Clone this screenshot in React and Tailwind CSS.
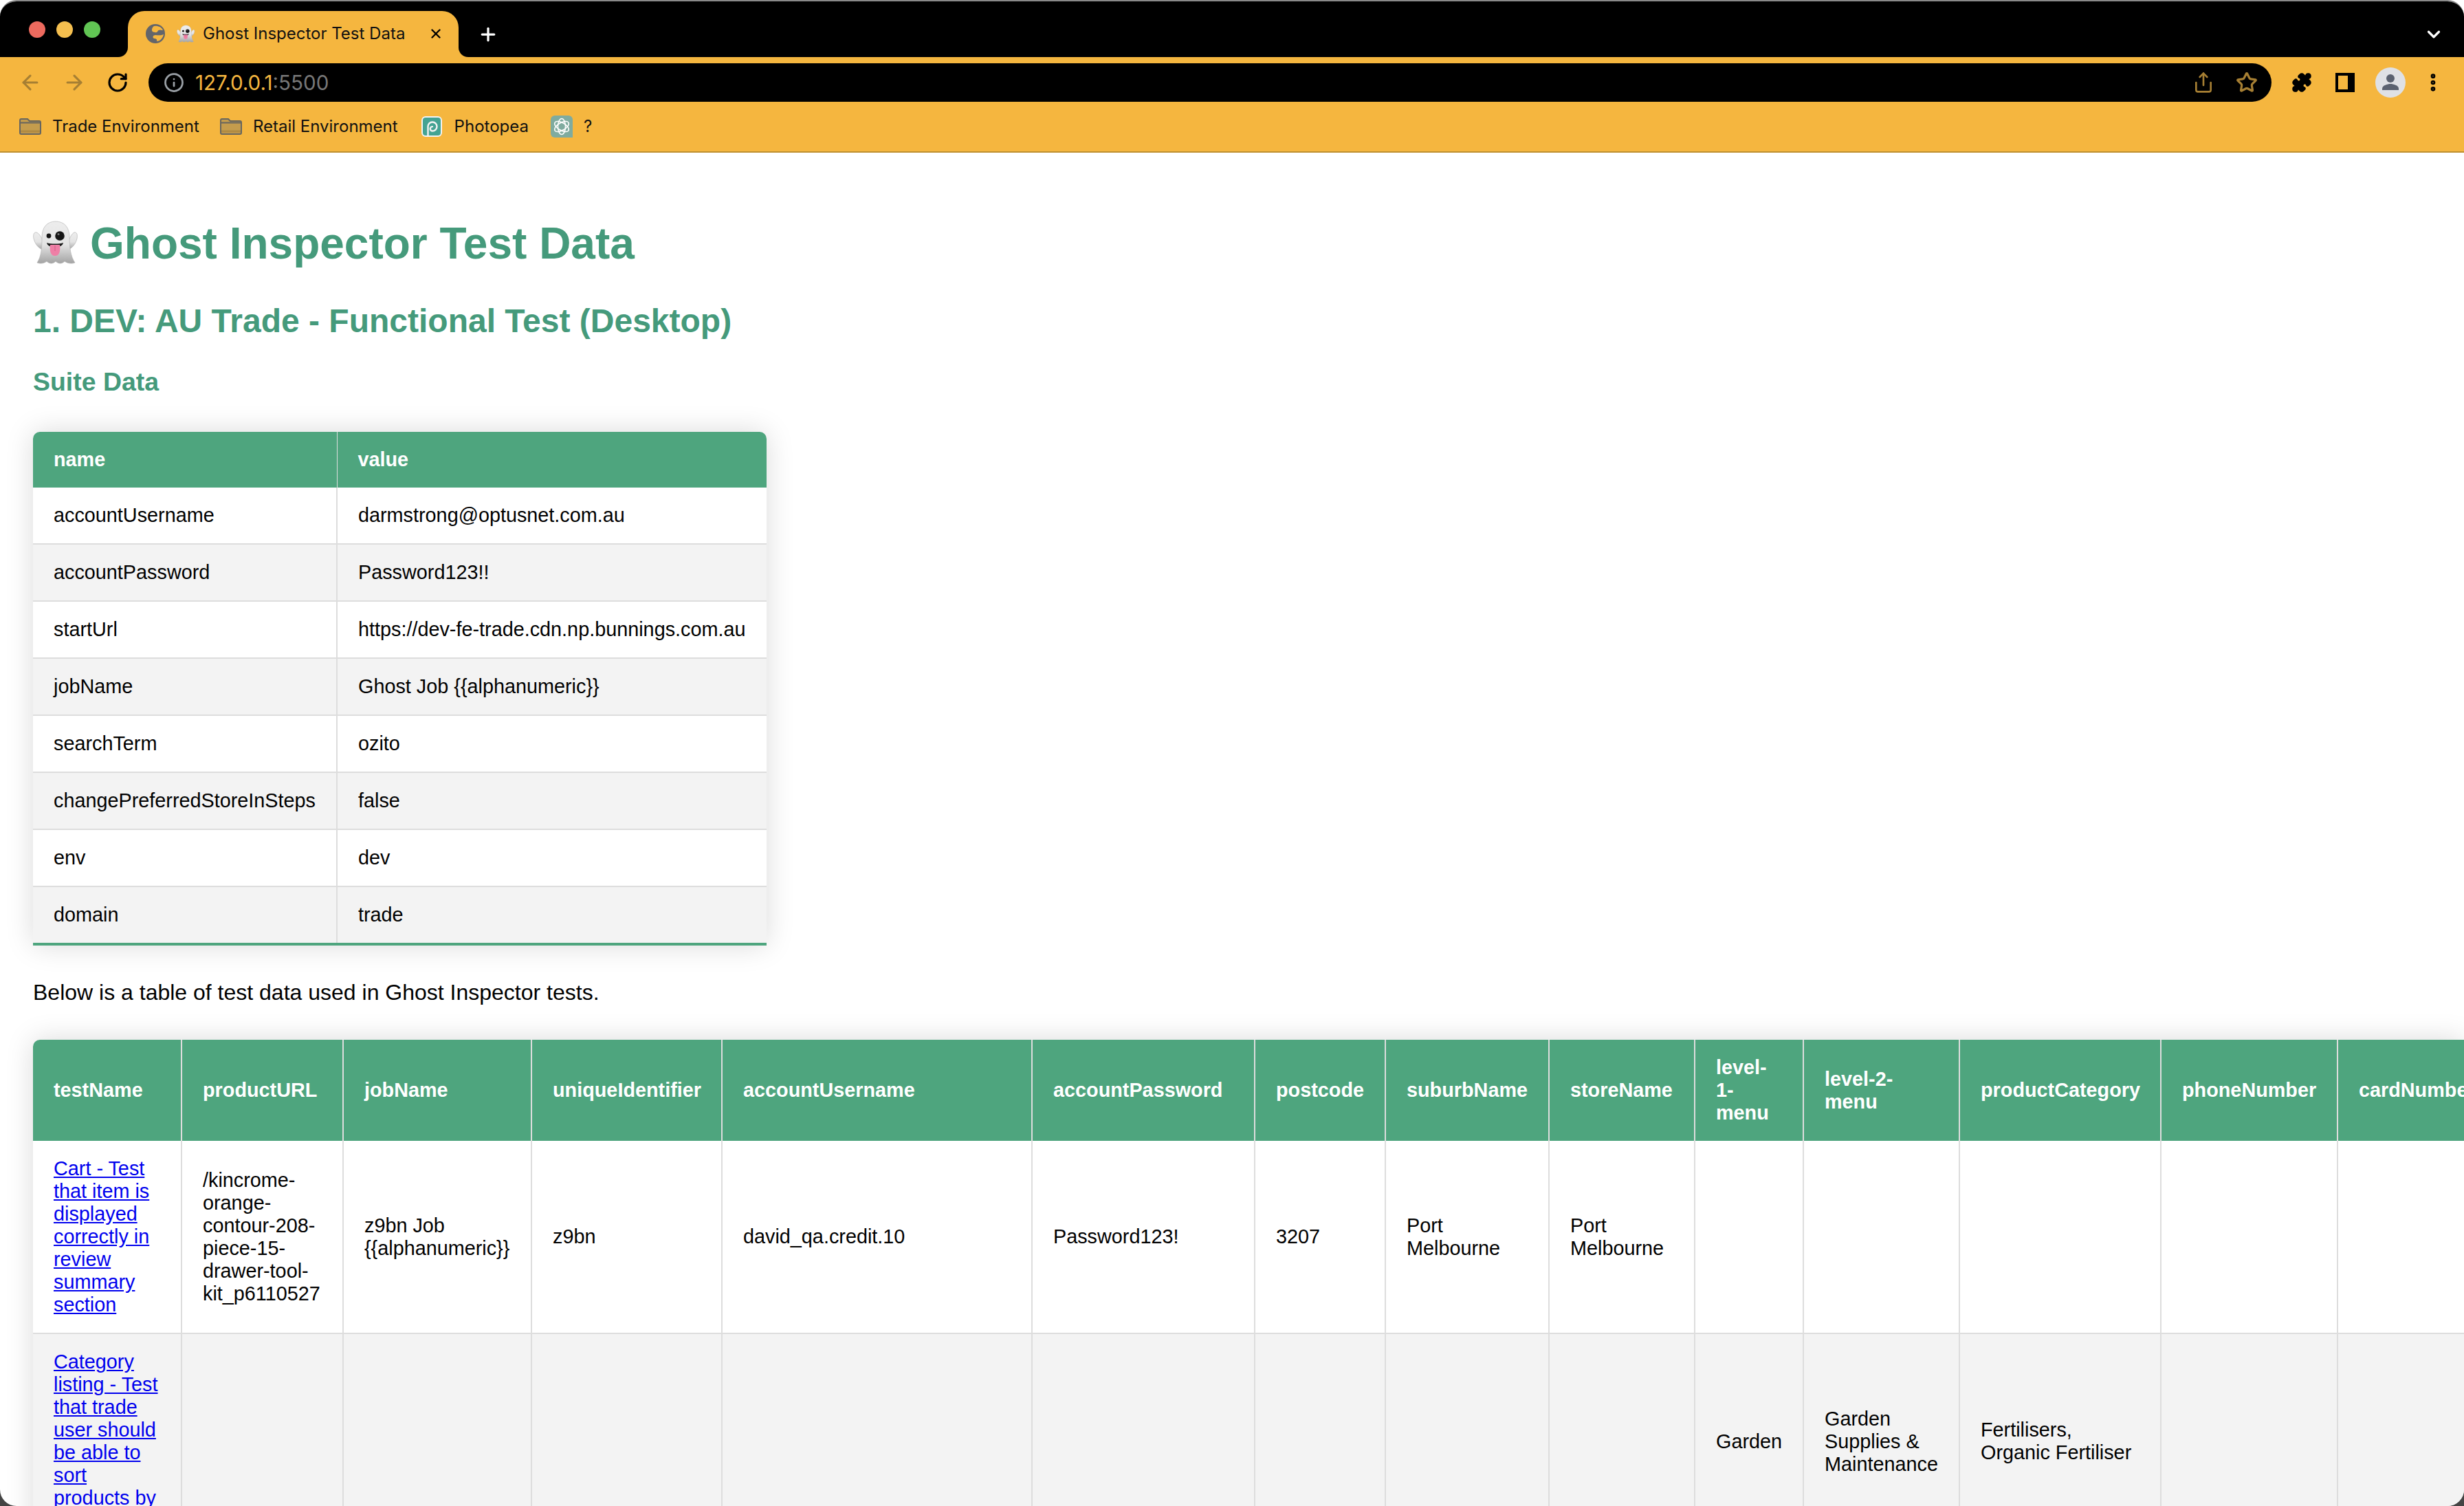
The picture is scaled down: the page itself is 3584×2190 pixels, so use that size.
import { Info, Share, Star, Puzzle, EllipsisVertical, ChevronDown, ArrowLeft, ArrowRight, RotateCw, X, Plus } from 'lucide-react';

const suiteRows = [
  ['accountUsername', 'darmstrong@optusnet.com.au'],
  ['accountPassword', 'Password123!!'],
  ['startUrl', 'https://dev-fe-trade.cdn.np.bunnings.com.au'],
  ['jobName', 'Ghost Job {{alphanumeric}}'],
  ['searchTerm', 'ozito'],
  ['changePreferredStoreInSteps', 'false'],
  ['env', 'dev'],
  ['domain', 'trade'],
];

const testHeaders = [
  ['testName', 'w-[216px]'],
  ['productURL', 'w-[235px]'],
  ['jobName', 'w-[274px]'],
  ['uniqueIdentifier', 'w-[277px]'],
  ['accountUsername', 'w-[451px]'],
  ['accountPassword', 'w-[324px]'],
  ['postcode', 'w-[190px]'],
  ['suburbName', 'w-[238px]'],
  ['storeName', 'w-[212px]'],
  ['level-1-menu', 'w-[158px]'],
  ['level-2-menu', 'w-[227px]'],
  ['productCategory', 'w-[293px]'],
  ['phoneNumber', 'w-[257px]'],
  ['cardNumber', 'w-[260px]'],
];

const testRows = [
  {
    link: 'Cart - Test that item is displayed correctly in review summary section',
    cells: ['/kincrome-orange-contour-208-piece-15-drawer-tool-kit_p6110527', 'z9bn Job {{alphanumeric}}', 'z9bn', 'david_qa.credit.10', 'Password123!', '3207', 'Port Melbourne', 'Port Melbourne', '', '', '', '', ''],
  },
  {
    link: 'Category listing - Test that trade user should be able to sort products by price',
    cells: ['', '', '', '', '', '', '', '', 'Garden', 'Garden Supplies & Maintenance', 'Fertilisers, Organic Fertiliser', '', ''],
  },
];

function GhostEmoji({ className, id }) {
  return (
    <svg viewBox="0 0 80 75" className={className}>
      <defs>
        <linearGradient id={id} x1="0" y1="0" x2="0" y2="1">
          <stop offset="0" stopColor="#ededed" />
          <stop offset="0.55" stopColor="#e4e4e4" />
          <stop offset="1" stopColor="#a3a3a3" />
        </linearGradient>
      </defs>
      <path d="M23 36C20 30 17 24 13 23 9 22 8 27 9 32 11 40 16 46 22 48ZM59 36C62 30 65 24 68 23 72 22 73 27 72 32 70 40 65 46 59 48Z" fill={`url(#${id})`} stroke="#ababab" strokeWidth="0.6" />
      <path d="M41 7C28 7 21 16 21 30 21 46 20 58 14 67 19 69 24 68 28 65 32 69 37 69 41 65 45 69 50 69 54 65 58 68 64 69 69 67 63 58 61 46 61 30 61 16 54 7 41 7Z" fill={`url(#${id})`} stroke="#b0b0b0" strokeWidth="0.6" />
      <circle cx="31" cy="28" r="3.4" fill="#161616" />
      <circle cx="47" cy="28" r="6.8" fill="#161616" />
      <circle cx="45" cy="25.5" r="1.5" fill="#777" />
      <path d="M28 38C34 40 46 40 52 38 51 42 48 44 40 44 32 44 29 42 28 38Z" fill="#1a1a1a" />
      <path d="M33 41H47C48 49 47 57 40 57 33 57 32 49 33 41Z" fill="#ef7fa6" />
      <path d="M40 42V50" stroke="#d45f88" strokeWidth="1" />
    </svg>
  );
}

function FolderIcon() {
  return (
    <svg viewBox="0 0 32 24" className="w-[32px] h-[24px] shrink-0">
      <path d="M1 3a2 2 0 0 1 2-2h9l3 3h14a2 2 0 0 1 2 2v15a2 2 0 0 1-2 2H3a2 2 0 0 1-2-2Z" fill="#c49c4d" stroke="#66655f" strokeWidth="2" />
      <path d="M1 6.5h30" stroke="#66655f" strokeWidth="2" />
      <path d="M2 19h28" stroke="#b08a42" strokeWidth="3" />
    </svg>
  );
}

function GlobeIcon() {
  return (
    <svg viewBox="0 0 28 28" className="w-[28px] h-[28px] shrink-0">
      <circle cx="14" cy="14" r="14" fill="#63656a" />
      <path d="M12 3C17 2 23 4 25 9 21 8 18 8 17 11 16 13 12 12 10 11 8 9 9 5 12 3ZM26 15C25 20 21 25 16 25 17 22 15 21 12 21 9 19 11 16 14 16 18 16 22 17 26 15Z" fill="#f5b63f" />
    </svg>
  );
}

function PhotopeaIcon() {
  return (
    <svg viewBox="0 0 30 30" className="w-[30px] h-[30px] shrink-0">
      <rect x="1" y="1" width="28" height="28" rx="5" fill="#44a393" stroke="#f3f3f3" strokeWidth="2" />
      <path d="M9.5 28V15a6.5 6.5 0 1 1 6.5 6.5 3.2 3.2 0 1 1 0-6.4" fill="none" stroke="#f3f3f3" strokeWidth="2.4" strokeLinecap="round" />
    </svg>
  );
}

function OpenAiIcon() {
  return (
    <svg viewBox="0 0 32 32" className="w-[32px] h-[32px] shrink-0">
      <path d="M0 6a6 6 0 0 1 6-6h20a6 6 0 0 1 6 6v26H6a6 6 0 0 1-6-6Z" fill="#7fab9f" />
      <g fill="none" stroke="#fff" strokeWidth="1.5">
        <ellipse cx="16" cy="16" rx="5.5" ry="11.5" />
        <ellipse cx="16" cy="16" rx="5.5" ry="11.5" transform="rotate(60 16 16)" />
        <ellipse cx="16" cy="16" rx="5.5" ry="11.5" transform="rotate(120 16 16)" />
      </g>
    </svg>
  );
}

function AvatarIcon() {
  return (
    <svg viewBox="0 0 44 44" className="w-[44px] h-[44px] shrink-0">
      <circle cx="22" cy="22" r="22" fill="#dfe1e5" />
      <circle cx="22" cy="16" r="6" fill="#5b6270" />
      <path d="M10 33v-2c0-5 8-7 12-7s12 2 12 7v2Z" fill="#5b6270" />
    </svg>
  );
}

function Bookmark({ icon, label, gap }) {
  return (
    <div className={`flex items-center ${gap}`}>
      {icon}
      <span className="text-[24px] leading-[30px] text-[#111]">{label}</span>
    </div>
  );
}

function BrowserChrome() {
  return (
    <div className="font-['Inter',sans-serif]">
      {/* Tab strip */}
      <div className="h-[81px] bg-black flex items-end">
        <div className="flex gap-[16px] pl-[42px] w-[186px] pb-[28px]">
          <div className="w-[24px] h-[24px] rounded-full bg-[#ed6a5e] shrink-0"></div>
          <div className="w-[24px] h-[24px] rounded-full bg-[#f5bf4f] shrink-0"></div>
          <div className="w-[24px] h-[24px] rounded-full bg-[#61c554] shrink-0"></div>
        </div>
        <div className="relative h-[67px] w-[481px] bg-[#f5b63f] rounded-t-[24px] flex items-center pl-[26px] pb-[2px]">
          <span className="absolute left-[-14px] bottom-0 w-[14px] h-[14px] bg-[#f5b63f]"></span>
          <span className="absolute left-[-14px] bottom-0 w-[14px] h-[14px] bg-black rounded-br-[14px]"></span>
          <span className="absolute right-[-14px] bottom-0 w-[14px] h-[14px] bg-[#f5b63f]"></span>
          <span className="absolute right-[-14px] bottom-0 w-[14px] h-[14px] bg-black rounded-bl-[14px]"></span>
          <GlobeIcon />
          <GhostEmoji id="ghost-tab" className="w-[32px] h-[30px] ml-[14px] shrink-0" />
          <span className="ml-[9px] text-[24px] leading-[30px] text-[#111] whitespace-nowrap">Ghost Inspector Test Data</span>
          <X className="w-[22px] h-[22px] text-black ml-auto mr-[22px] shrink-0" strokeWidth={2.6} />
        </div>
        <Plus className="w-[30px] h-[30px] text-white ml-[28px] mb-[18px] shrink-0" strokeWidth={2.6} />
        <ChevronDown className="w-[30px] h-[30px] text-white ml-auto mr-[29px] mb-[18px] shrink-0" strokeWidth={2.6} />
      </div>

      {/* Address bar */}
      <div className="h-[75px] bg-[#f5b63f] flex items-start pt-[9px]">
        <div className="flex items-center w-[216px] h-[56px] pl-[27px] gap-[30px]">
          <ArrowLeft className="w-[34px] h-[34px] text-[#a67f33] shrink-0" strokeWidth={2.2} />
          <ArrowRight className="w-[34px] h-[34px] text-[#a67f33] shrink-0" strokeWidth={2.2} />
          <RotateCw className="w-[32px] h-[32px] text-black shrink-0" strokeWidth={2.4} />
        </div>
        <div className="w-[3088px] h-[56px] bg-black rounded-full flex items-center pl-[22px] pr-[20px]">
          <Info className="w-[30px] h-[30px] text-[#9aa0a6] shrink-0" strokeWidth={2.2} />
          <span className="ml-[16px] text-[29.6px] text-[#f5b63f]">127.0.0.1</span>
          <span className="text-[29.6px] text-[#777]">:5500</span>
          <Share className="w-[32px] h-[32px] text-[#a67f33] ml-auto shrink-0" strokeWidth={2} />
          <Star className="w-[32px] h-[32px] text-[#a67f33] ml-[31px] shrink-0" strokeWidth={2.4} />
        </div>
        <div className="flex items-center h-[56px]">
          <Puzzle className="w-[30px] h-[30px] text-black fill-black ml-[29px] shrink-0" />
          <div className="w-[28px] h-[28px] border-y-[4px] border-l-[4px] border-r-[10px] border-black ml-[34px] shrink-0"></div>
          <div className="ml-[30px] shrink-0"><AvatarIcon /></div>
          <EllipsisVertical className="w-[32px] h-[32px] text-black ml-[24px] shrink-0" strokeWidth={3} />
        </div>
      </div>

      {/* Bookmarks */}
      <div className="h-[64px] bg-[#f5b63f] border-b-2 border-[#bd8f30] flex items-center pl-[28px] pb-[10px]">
        <Bookmark icon={<FolderIcon />} label="Trade Environment" gap="gap-[16px]" />
        <div className="ml-[30px]"><Bookmark icon={<FolderIcon />} label="Retail Environment" gap="gap-[16px]" /></div>
        <div className="ml-[34px]"><Bookmark icon={<PhotopeaIcon />} label="Photopea" gap="gap-[18px]" /></div>
        <div className="ml-[32px]"><Bookmark icon={<OpenAiIcon />} label="?" gap="gap-[16px]" /></div>
      </div>
    </div>
  );
}

function SuiteTable() {
  return (
    <div className="w-[1067px] mt-[51px] rounded-t-[10px] overflow-hidden shadow-[0_0_40px_rgba(0,0,0,0.15)]">
      <table className="w-full table-fixed border-collapse text-[28.8px] leading-[33px]">
        <thead>
          <tr className="bg-[#4ea57e] text-white text-left">
            <th className="w-[442px] px-[30px] py-[24px] font-bold border-r border-[#dddddd]">name</th>
            <th className="px-[30px] py-[24px] font-bold">value</th>
          </tr>
        </thead>
        <tbody>
          {suiteRows.map(([name, value], i) => (
            <tr key={name} className={`border-b-2 ${i % 2 ? 'bg-[#f3f3f3]' : 'bg-white'} ${i === suiteRows.length - 1 ? 'border-b-4 border-[#4ea57e]' : 'border-[#dddddd]'}`}>
              <td className="px-[30px] py-[24px] border-r-2 border-[#dddddd]">{name}</td>
              <td className="px-[30px] py-[24px]">{value}</td>
            </tr>
          ))}
        </tbody>
      </table>
    </div>
  );
}

function TestTable() {
  return (
    <div className="w-[3536px] mt-[50px] rounded-tl-[10px] overflow-hidden shadow-[0_0_40px_rgba(0,0,0,0.15)]">
      <table className="table-fixed border-collapse w-[3612px] text-[28.8px] leading-[33px]">
        <thead>
          <tr className="bg-[#4ea57e] text-white text-left">
            {testHeaders.map(([label, width]) => (
              <th key={label} className={`${width} px-[30px] py-[24px] font-bold border-r-2 border-[#dddddd]`}>{label}</th>
            ))}
          </tr>
        </thead>
        <tbody>
          {testRows.map((row, i) => (
            <tr key={row.link} className={`border-b-2 border-[#dddddd] ${i % 2 ? 'bg-[#f3f3f3]' : 'bg-white'}`}>
              <td className="px-[30px] py-[24px] border-r-2 border-[#dddddd]">
                <a href="#" className="text-[#0000ee] underline">{row.link}</a>
              </td>
              {row.cells.map((cell, j) => (
                <td key={j} className="px-[30px] py-[24px] border-r-2 border-[#dddddd]">{cell}</td>
              ))}
            </tr>
          ))}
        </tbody>
      </table>
    </div>
  );
}

export default function App() {
  return (
    <div className="w-[3584px] h-[2190px] overflow-hidden bg-linear-to-b from-white from-50% to-[#444] to-50% font-['Liberation_Sans',Arial,sans-serif] text-black">
      <div className="h-[2190px] overflow-hidden bg-white border-t-2 border-[#8a8a8a] rounded-t-[24px] rounded-b-[24px]">
        <BrowserChrome />

        <div className="pl-[48px] pt-[95px]">
          <h1 className="h-[74px] text-[64px] leading-[74px] font-bold text-[#459a7b] flex items-center">
            <GhostEmoji id="ghost-title" className="w-[80px] h-[75px] ml-[-8px] mr-[11px] mb-[4px] shrink-0" />
            Ghost Inspector Test Data
          </h1>
          <h2 className="mt-[48px] text-[48px] leading-[55px] font-bold text-[#459a7b]">1. DEV: AU Trade - Functional Test (Desktop)</h2>
          <h3 className="mt-[40px] text-[37.44px] leading-[43px] font-bold text-[#459a7b]">Suite Data</h3>

          <SuiteTable />

          <p className="mt-[50px] text-[32px] leading-[37px]">Below is a table of test data used in Ghost Inspector tests.</p>

          <TestTable />
        </div>
      </div>
    </div>
  );
}
